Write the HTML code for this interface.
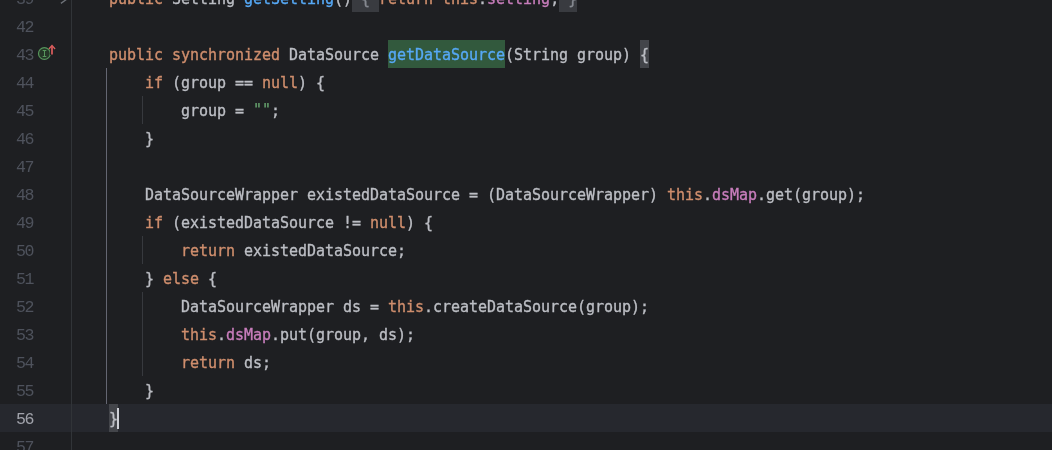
<!DOCTYPE html>
<html lang="en"><head><meta charset="utf-8"><title>Editor</title>
<style>
html,body{margin:0;padding:0;background:#1e1f22;}
body{width:1052px;height:450px;overflow:hidden;position:relative;
 font-family:"DejaVu Sans Mono","Liberation Mono",monospace;font-size:15px;line-height:28px;
 color:#bcbec4;letter-spacing:-0.03px;-webkit-text-stroke:0.35px currentColor;-webkit-font-smoothing:antialiased;}
#ed{position:absolute;left:0;top:0;width:1052px;height:450px;will-change:transform;}
.row{position:absolute;left:0;width:1052px;height:28px;white-space:pre;}
.cur{background:#26282e;}
.ln{position:absolute;left:0;width:33px;height:28px;text-align:right;color:#4e525c;top:2px;-webkit-text-stroke:0;font-family:'Liberation Mono',monospace;font-size:16.6px;letter-spacing:-1.5px;}
.cur .ln{color:#a1a3ab;}
.code{position:absolute;top:0;height:28px;line-height:30px;white-space:pre;}
.code span{display:inline-block;height:28px;line-height:30px;vertical-align:top;}
.k{color:#cf8e6d;}
.m{color:#56a8f5;}
.f{color:#c77dbb;}
.s{color:#6aab73;-webkit-text-stroke:0.1px currentColor;position:relative;top:-1px;}
.hl{background:#32593d;}
.br{background:#43454a;}
.fold{background:#393b40;color:#868a91;}
.gline{position:absolute;left:71px;top:0;width:1px;height:450px;background:#313438;}
.guide{position:absolute;width:1px;background:#37393e;}
.guide.sel{background:#646672;}
.caret{position:absolute;width:2px;background:#ced0d6;}
</style></head><body><div id="ed">
<div class="row" style="top:-16px"><span class="ln">39</span><span class="code" style="left:109px"><span class="k">public</span> Setting <span class="m">getSetting</span>()<span class="fold"> { </span><span class="k">return this</span>.<span class="f">setting</span>;<span class="fold"> }</span></span></div>
<div class="row" style="top:12px"><span class="ln">42</span></div>
<div class="row" style="top:40px"><span class="ln">43</span><span class="code" style="left:109px"><span class="k">public synchronized</span> DataSource <span class="m hl">getDataSource</span>(String group) <span class="br">{</span></span></div>
<div class="row" style="top:68px"><span class="ln">44</span><span class="code" style="left:145px"><span class="k">if</span> (group == <span class="k">null</span>) {</span></div>
<div class="row" style="top:96px"><span class="ln">45</span><span class="code" style="left:181px">group = <span class="s">""</span>;</span></div>
<div class="row" style="top:124px"><span class="ln">46</span><span class="code" style="left:145px">}</span></div>
<div class="row" style="top:152px"><span class="ln">47</span></div>
<div class="row" style="top:180px"><span class="ln">48</span><span class="code" style="left:145px">DataSourceWrapper existedDataSource = (DataSourceWrapper) <span class="k">this</span>.<span class="f">dsMap</span>.get(group);</span></div>
<div class="row" style="top:208px"><span class="ln">49</span><span class="code" style="left:145px"><span class="k">if</span> (existedDataSource != <span class="k">null</span>) {</span></div>
<div class="row" style="top:236px"><span class="ln">50</span><span class="code" style="left:181px"><span class="k">return</span> existedDataSource;</span></div>
<div class="row" style="top:264px"><span class="ln">51</span><span class="code" style="left:145px">} <span class="k">else</span> {</span></div>
<div class="row" style="top:292px"><span class="ln">52</span><span class="code" style="left:181px">DataSourceWrapper ds = <span class="k">this</span>.createDataSource(group);</span></div>
<div class="row" style="top:320px"><span class="ln">53</span><span class="code" style="left:181px"><span class="k">this</span>.<span class="f">dsMap</span>.put(group, ds);</span></div>
<div class="row" style="top:348px"><span class="ln">54</span><span class="code" style="left:181px"><span class="k">return</span> ds;</span></div>
<div class="row" style="top:376px"><span class="ln">55</span><span class="code" style="left:145px">}</span></div>
<div class="row cur" style="top:404px"><span class="ln">56</span><span class="code" style="left:109px"><span class="br">}</span></span></div>
<div class="row" style="top:432px"><span class="ln">57</span></div>
<div class="gline"></div>
<div class="guide sel" style="left:106px;top:68px;height:336px"></div>
<div class="guide" style="left:142px;top:96px;height:28px"></div>
<div class="guide" style="left:142px;top:236px;height:28px"></div>
<div class="guide" style="left:142px;top:292px;height:84px"></div>
<div class="caret" style="left:117px;top:408px;height:21px"></div>
<svg style="position:absolute;left:34px;top:40px" width="26" height="28" viewBox="34 40 26 28">
<circle cx="44.4" cy="53.5" r="5.9" fill="#253627" stroke="#57965c" stroke-width="1.2"/>
<path d="M42.7 50.5h3.6M44.5 50.5v6M42.7 56.5h3.6" stroke="#57965c" stroke-width="1" fill="none"/>
<path d="M52 55V45.8M49.3 48.7L52 45.7l2.7 3" stroke="#1e1f22" stroke-width="4" fill="none"/>
<path d="M52 54.4V46.2" stroke="#de5e5e" stroke-width="1.7" fill="none"/><path d="M48.9 49L52 45.5l3.1 3.5" stroke="#de5e5e" stroke-width="1.2" fill="none" stroke-linejoin="miter"/>
</svg>
<svg style="position:absolute;left:56px;top:0px" width="14" height="8" viewBox="56 0 14 8">
<path d="M60.9 3.4L67 -1" stroke="#6f737a" stroke-width="1.3" fill="none"/></svg>
</div></body></html>
